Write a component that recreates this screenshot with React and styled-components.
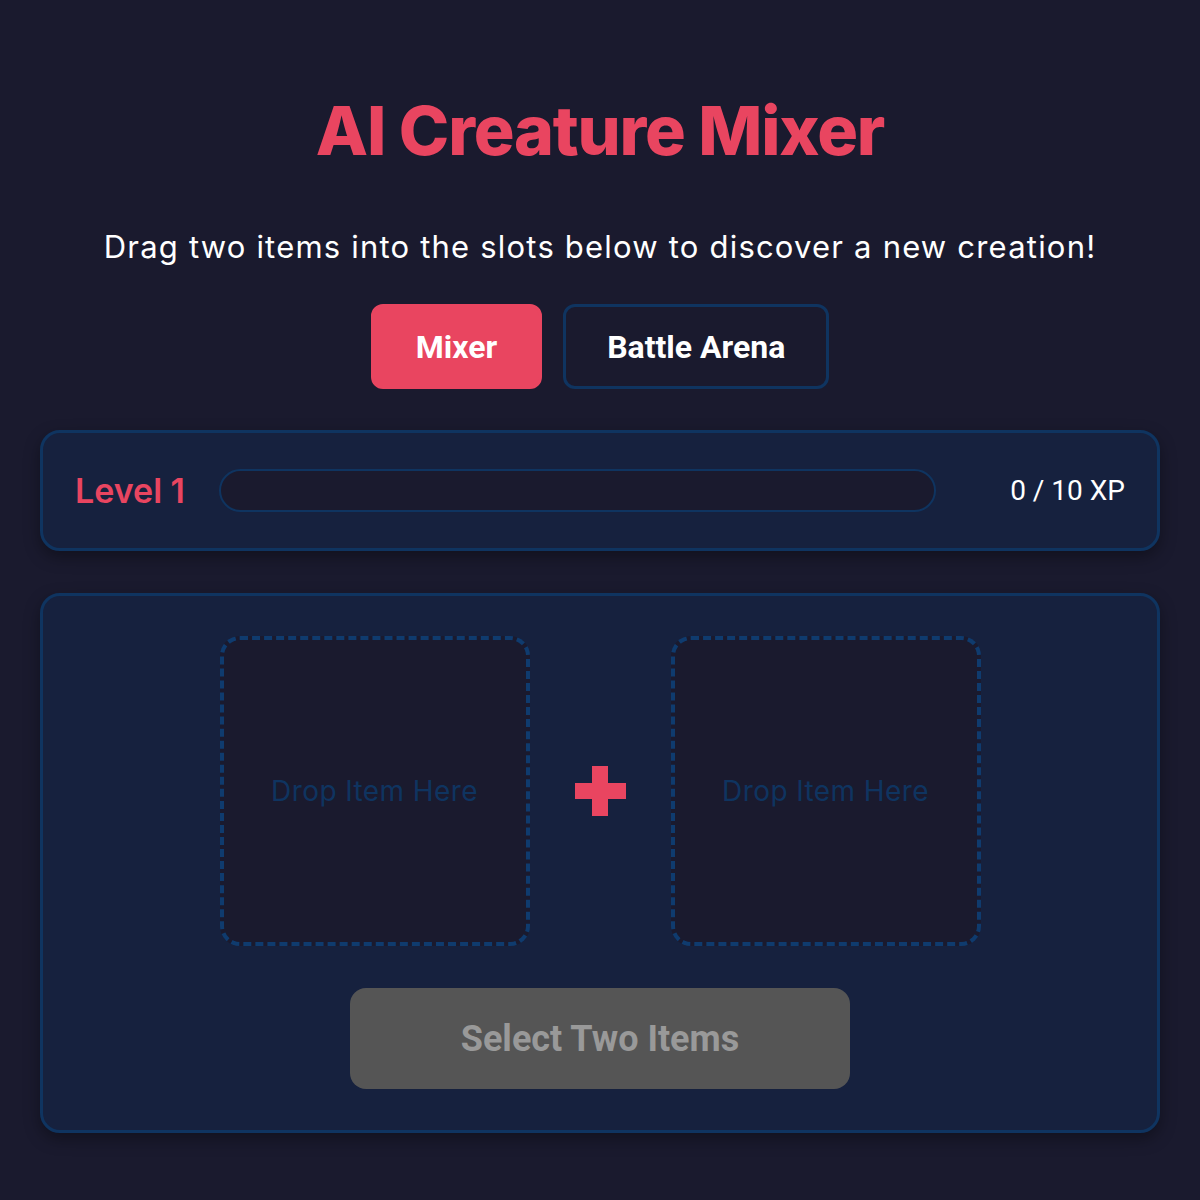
import styled, { createGlobalStyle } from 'styled-components';

const GlobalStyle = createGlobalStyle`
    html, body {
        margin: 0;
        padding: 0;
        background: #1a1a2e;
        color: #ffffff;
        font-family: Inter, "Open Sans", sans-serif;
    }
    * {
        box-sizing: border-box;
    }
`;

const Page = styled.div`
    width: 1200px;
    min-height: 1200px;
    padding: 88px 40px 60px;
    display: flex;
    flex-direction: column;
    align-items: center;
`;

const Title = styled.h1`
    margin: 0;
    font-size: 68px;
    line-height: 84px;
    font-weight: 800;
    color: #e94560;
    letter-spacing: -1.2px;
`;

const Subtitle = styled.p`
    margin: 55px 0 0;
    font-size: 31px;
    line-height: 40px;
    font-weight: 400;
    letter-spacing: 1.2px;
    color: #ffffff;
`;

const Tabs = styled.div`
    display: flex;
    gap: 21px;
    margin-top: 37px;
`;

const Tab = styled.button`
    height: 85px;
    padding: 0 ${(p) => p.$pad}px;
    border-radius: 12px;
    border: 3px solid ${(p) => (p.$active ? '#e94560' : '#0f3460')};
    background: ${(p) => (p.$active ? '#e94560' : '#1a1a2e')};
    color: #ffffff;
    font-family: Roboto, "Liberation Sans", sans-serif;
    font-weight: 700;
    font-size: 32px;
    cursor: pointer;
`;

const Panel = styled.section`
    width: 1120px;
    background: #16213e;
    border: 3px solid #0f3460;
    border-radius: 20px;
    box-shadow: 0 6px 16px rgba(0, 0, 0, 0.35);
`;

const LevelPanel = styled(Panel)`
    margin-top: 41px;
    height: 121px;
    display: flex;
    align-items: center;
    padding: 0 32px 0 32px;
`;

const LevelLabel = styled.div`
    font-size: 34px;
    font-weight: 600;
    color: #e94560;
    width: 144px;
    flex-shrink: 0;
`;

const Track = styled.div`
    width: 717px;
    height: 43px;
    border-radius: 22px;
    background: #1a1a2e;
    border: 2px solid #0f3460;
    overflow: hidden;
`;

const Fill = styled.div`
    height: 100%;
    background: #e94560;
`;

const XpText = styled.div`
    margin-left: auto;
    font-family: Roboto, "Liberation Sans", sans-serif;
    font-size: 28px;
    color: #ffffff;
`;

const MixerPanel = styled(Panel)`
    margin-top: 42px;
    padding: 40px 0 41px;
    display: flex;
    flex-direction: column;
    align-items: center;
    gap: 42px;
`;

const SlotRow = styled.div`
    display: flex;
    align-items: center;
    gap: 45px;
`;

const Slot = styled.div`
    width: 310px;
    height: 310px;
    border: 4px dashed #0f3b6e;
    border-radius: 20px;
    background: #1a1a2e;
    display: flex;
    align-items: center;
    justify-content: center;
    font-size: 28px;
    letter-spacing: 0.4px;
    color: #0f3460;
`;

const Plus = styled.div`
    position: relative;
    width: 51px;
    height: 50px;
    &::before,
    &::after {
        content: '';
        position: absolute;
        background: #e94560;
    }
    &::before {
        left: 0;
        right: 0;
        top: 17px;
        height: 16px;
    }
    &::after {
        top: 0;
        bottom: 0;
        left: 17px;
        width: 16px;
    }
`;

const MixButton = styled.button`
    width: 500px;
    height: 101px;
    border: none;
    border-radius: 16px;
    background: #555555;
    color: #999999;
    font-family: Roboto, "Liberation Sans", sans-serif;
    font-weight: 700;
    font-size: 36px;
    cursor: not-allowed;
`;

const App = () => {
    const xp = 0;
    const xpNeeded = 10;

    return (
        <>
            <GlobalStyle />
            <Page>
                <Title>AI Creature Mixer</Title>
                <Subtitle>Drag two items into the slots below to discover a new creation!</Subtitle>
                <Tabs>
                    <Tab $active $pad={42}>Mixer</Tab>
                    <Tab $pad={41}>Battle Arena</Tab>
                </Tabs>
                <LevelPanel>
                    <LevelLabel>Level 1</LevelLabel>
                    <Track>
                        <Fill style={{ width: `${(xp / xpNeeded) * 100}%` }} />
                    </Track>
                    <XpText>
                        {xp} / {xpNeeded} XP
                    </XpText>
                </LevelPanel>
                <MixerPanel>
                    <SlotRow>
                        <Slot>Drop Item Here</Slot>
                        <Plus />
                        <Slot>Drop Item Here</Slot>
                    </SlotRow>
                    <MixButton disabled>Select Two Items</MixButton>
                </MixerPanel>
            </Page>
        </>
    );
};

export default App;
